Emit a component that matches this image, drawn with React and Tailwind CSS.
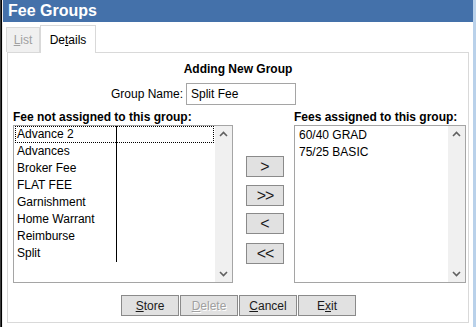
import React from 'react';

const leftFees = [
  'Advance 2',
  'Advances',
  'Broker Fee',
  'FLAT FEE',
  'Garnishment',
  'Home Warrant',
  'Reimburse',
  'Split',
];

const rightFees = ['60/40 GRAD', '75/25 BASIC'];

const Chevron = ({ up }) => (
  <svg width="9" height="6" viewBox="0 0 9 6" fill="none">
    <path
      d={up ? 'M1 5L4.5 1.5L8 5' : 'M1 1L4.5 4.5L8 1'}
      stroke="#606060"
      strokeWidth="1.6"
    />
  </svg>
);

const ScrollBar = () => (
  <div className="flex w-[17px] flex-col items-center justify-between bg-[#f0f0f0] py-[5px]">
    <Chevron up />
    <Chevron />
  </div>
);

const Btn = ({ children, className = '' }) => (
  <button
    className={`flex items-center justify-center border border-[#8a8a8a] bg-[#e1e1e1] text-[#1a1a1a] ${className}`}
  >
    {children}
  </button>
);

export default function App() {
  return (
    <div
      className="flex h-[327px] w-[476px] overflow-hidden bg-white text-[12px] text-black"
      style={{ fontFamily: '"Liberation Sans", Arial, sans-serif' }}
    >
      {/* window edge */}
      <div className="w-[1px] bg-[#3a3a3a]" />
      <div className="w-[1px] bg-black" />
      <div className="w-[1px] bg-[#ececec]" />

      <div className="flex w-[470px] flex-col">
        {/* Title bar */}
        <div className="h-[22px] bg-[#4471aa] pl-[5px] text-[16px] font-bold leading-[22px] text-white">
          Fee Groups
        </div>

        {/* Tabs */}
        <div className="ml-[3px] flex h-[30px] items-end">
          <div className="flex h-[25px] w-[34px] items-center justify-center border border-b-0 border-[#d9d9d9] bg-[#f0f0f0] text-[#a0a0a0]">
            <span>
              <span className="underline">L</span>ist
            </span>
          </div>
          <div className="relative z-10 -mb-px flex h-[28px] w-[56px] items-center justify-center border border-b-0 border-[#d9d9d9] bg-white">
            <span>
              De<span className="underline">t</span>ails
            </span>
          </div>
        </div>

        {/* Panel */}
        <div className="ml-[4px] flex h-[271px] w-[462px] flex-col border border-[#d9d9d9] pl-[5px]">
          <div className="mt-[8px] h-[16px] pr-[5px] text-center font-bold leading-[16px]">
            Adding New Group
          </div>

          <div className="mt-[6px] flex h-[22px] items-center">
            <div className="w-[173px] pr-[3px] text-right">Group Name:</div>
            <div className="flex h-[22px] w-[110px] items-center border border-[#a5a5a5] pl-[4px]">
              Split Fee
            </div>
          </div>

          <div className="mt-[5px] flex h-[14px] font-bold leading-[14px]">
            <div className="w-[281px]">Fee not assigned to this group:</div>
            <div>Fees assigned to this group:</div>
          </div>

          <div className="mt-[1px] flex">
            {/* Left list */}
            <div className="flex h-[158px] w-[220px] border border-[#a5a5a5]">
              <div className="flex-1 pl-[1px] pr-[1px]">
                {leftFees.map((fee, i) => (
                  <div
                    key={fee}
                    className={`flex h-[17px] items-center ${
                      i === 0 ? 'outline-1 -outline-offset-1 outline-dotted outline-black' : ''
                    }`}
                  >
                    <div className="h-full w-[102px] border-r border-black pl-[2px] leading-[17px]">
                      {fee}
                    </div>
                  </div>
                ))}
              </div>
              <ScrollBar />
            </div>

            {/* Move buttons */}
            <div className="ml-[13px] flex w-[38px] flex-col pt-[31px] text-[16px] leading-none text-[#333]">
              <Btn className="h-[21px] w-[38px]">&gt;</Btn>
              <Btn className="mt-[8px] h-[21px] w-[38px] tracking-[-1px]">&gt;&gt;</Btn>
              <Btn className="mt-[7px] h-[21px] w-[38px]">&lt;</Btn>
              <Btn className="mt-[9px] h-[21px] w-[38px] tracking-[-1px]">&lt;&lt;</Btn>
            </div>

            {/* Right list */}
            <div className="ml-[10px] flex h-[158px] w-[172px] border border-[#a5a5a5]">
              <div className="flex-1 pl-[4px] pt-[1px]">
                {rightFees.map((fee) => (
                  <div key={fee} className="h-[17px] leading-[17px]">
                    {fee}
                  </div>
                ))}
              </div>
              <ScrollBar />
            </div>
          </div>

          <div className="mt-[12px] flex gap-[1px] pl-[108px]">
            <Btn className="h-[21px] w-[58px]">
              <span>
                <span className="underline">S</span>tore
              </span>
            </Btn>
            <Btn className="h-[21px] w-[58px] text-[#a0a0a0] [text-shadow:1px_1px_0_#fff]">
              <span>
                <span className="underline">D</span>elete
              </span>
            </Btn>
            <Btn className="h-[21px] w-[58px]">
              <span>
                <span className="underline">C</span>ancel
              </span>
            </Btn>
            <Btn className="h-[21px] w-[58px]">
              <span>
                E<span className="underline">x</span>it
              </span>
            </Btn>
          </div>
        </div>
      </div>

      <div className="w-[3px] bg-[#b9d1ea]" />
    </div>
  );
}
